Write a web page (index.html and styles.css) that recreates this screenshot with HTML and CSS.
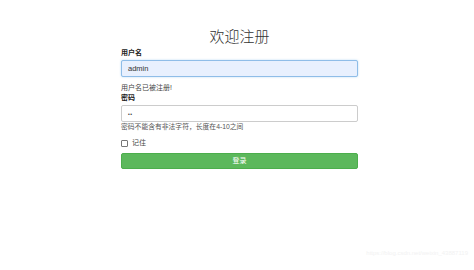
FILE: index.html
```html
<!DOCTYPE html>
<html>
<head>
<meta charset="utf-8">
<link rel="stylesheet" href="styles.css">
</head>
<body>
<div class="form">
  <h2 class="title">欢迎注册</h2>
  <label class="label">用户名</label>
  <div class="input active">admin</div>
  <div class="msg">用户名已被注册!</div>
  <label class="label tight">密码</label>
  <div class="input pw">••</div>
  <div class="hint">密码不能含有非法字符，长度在4-10之间</div>
  <div class="check"><span class="box"></span><span>记住</span></div>
  <div class="btn">登录</div>
</div>
<div class="wm">https://blog.csdn.net/weixin_43887119</div>
</body>
</html>
```
FILE: styles.css
```css
html, body {
  margin: 0;
  padding: 0;
  background: #fff;
  width: 474px;
  height: 270px;
  overflow: hidden;
}
body {
  font-family: "Liberation Sans", "Noto Sans CJK SC", sans-serif;
  color: #333;
  position: relative;
}
.form {
  margin-left: 121px;
  width: 237px;
  display: flex;
  flex-direction: column;
}
.title {
  margin: 27px 0 0;
  font-size: 15px;
  line-height: 20px;
  font-weight: 300;
  text-align: center;
  color: #333;
}
.label {
  margin-top: 1px;
  font-size: 7px;
  line-height: 10px;
  font-weight: bold;
  color: #222;
}
.label.tight { margin-top: 0; }
.input {
  margin-top: 2px;
  height: 17px;
  box-sizing: border-box;
  border: 1px solid #ccc;
  border-radius: 2px;
  padding: 0 6px;
  font-size: 7.5px;
  line-height: 15px;
  color: #333;
}
.input.active {
  background: #e8f0fe;
  border-color: #8fbde8;
  box-shadow: 0 0 2px rgba(102, 175, 233, 0.5);
}
.input.pw {
  font-size: 5px;
  letter-spacing: 0.5px;
  padding-left: 6px;
  line-height: 16px;
}
.msg {
  margin-top: 6px;
  font-size: 7px;
  line-height: 10px;
  color: #444;
}
.hint {
  font-size: 6.8px;
  line-height: 10px;
  color: #555;
}
.check {
  margin-top: 6px;
  display: flex;
  align-items: center;
  gap: 4px;
  font-size: 7px;
  line-height: 10px;
  color: #444;
}
.box {
  width: 5px;
  height: 5px;
  border: 1px solid #777;
  border-radius: 1px;
  background: #fff;
}
.btn {
  margin-top: 5px;
  height: 16px;
  box-sizing: border-box;
  background: #5cb85c;
  border: 1px solid #4cae4c;
  border-radius: 2px;
  color: #fff;
  font-size: 7px;
  line-height: 14px;
  text-align: center;
}
.wm {
  position: absolute;
  right: 6px;
  top: 250px;
  font-size: 6px;
  color: #f2f2f2;
}
```
